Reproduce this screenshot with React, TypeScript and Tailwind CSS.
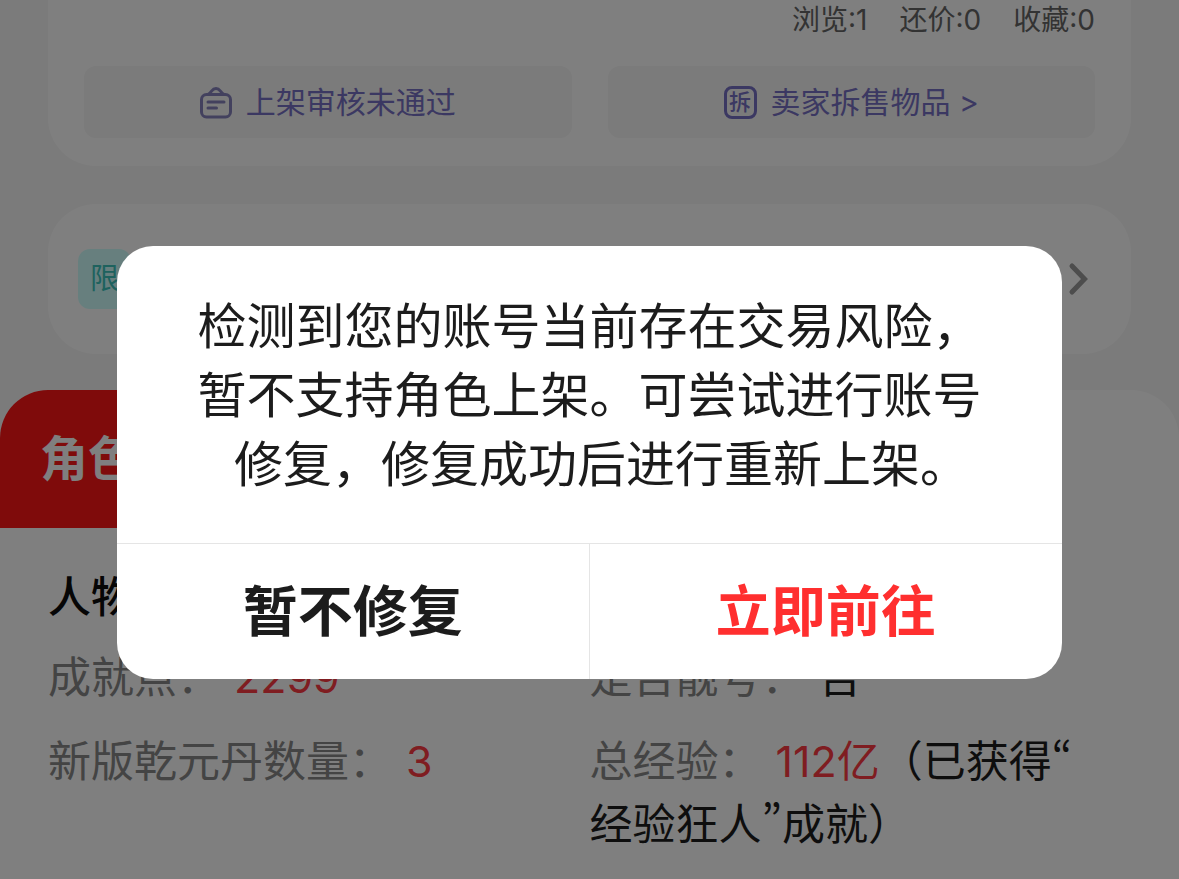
import React from 'react';

const stats = [
  { label: '浏览', value: 1 },
  { label: '还价', value: 0 },
  { label: '收藏', value: 0 },
];

function ReviewIcon() {
  return (
    <svg width="32" height="36" viewBox="0 0 32 36" fill="none" stroke="#8783bd" strokeWidth="3" strokeLinecap="round" strokeLinejoin="round">
      <rect x="1.5" y="10.5" width="29" height="22.5" rx="5" />
      <path d="M8.5 10 C11.5 8.5 12 4.5 16 4.5 C20 4.5 20.5 8.5 23.5 10" />
      <path d="M8 18 H24 M8 24 H16.5" />
    </svg>
  );
}

function SplitIcon() {
  return (
    <span className="flex size-[33px] items-center justify-center rounded-lg border-3 border-current text-[22px] leading-none font-medium">
      拆
    </span>
  );
}

function Chevron() {
  return (
    <svg width="24" height="36" viewBox="0 0 24 36" fill="none" stroke="#9a9a9a" strokeWidth="5" strokeLinecap="round" strokeLinejoin="miter">
      <path d="M5 5 L17.5 18 L5 31" />
    </svg>
  );
}

function DetailRow({ label, children }: { label: string; children: React.ReactNode }) {
  return (
    <div className="text-[43px] leading-[63px] text-[#1c1c1c]">
      <span className="mr-3.5 text-[#888888]">{label}：</span>
      {children}
    </div>
  );
}

// Curly quotes come from the CJK font, in its proportional width
function Quote({ children }: { children: string }) {
  return <span className="font-['Noto_Sans_CJK_SC',sans-serif] leading-none [font-feature-settings:'pwid']">{children}</span>;
}

function SummaryCard() {
  return (
    <section className="mx-12 rounded-b-[48px] bg-white px-9 pb-7">
      <div className="flex justify-end gap-8 text-[28px] leading-10 text-[#666666]">
        {stats.map((stat) => (
          <span key={stat.label}>
            {stat.label}:{stat.value}
          </span>
        ))}
      </div>
      <div className="mt-[26px] grid grid-cols-2 gap-9 text-[30px] leading-10 text-[#7670c4]">
        <button className="flex h-[72px] items-center justify-center gap-3.5 rounded-xl bg-[#f6f6f6]">
          <ReviewIcon />
          上架审核未通过
        </button>
        <button className="flex h-[72px] items-center justify-center gap-3.5 rounded-xl bg-[#f6f6f6]">
          <SplitIcon />
          卖家拆售物品 &gt;
        </button>
      </div>
    </section>
  );
}

function RiskDialog() {
  return (
    <div className="fixed inset-0 flex items-center justify-center bg-black/50 px-[117px] pt-[46px]">
      <div role="dialog" aria-modal="true" aria-labelledby="risk-message" className="w-full overflow-hidden rounded-[36px] bg-white">
        {/* The closing full stop hangs by half its width when the line is centred */}
        <p id="risk-message" className="px-20 pt-[46px] pb-11 text-center text-[49px] leading-[69px] text-[#1c1c1c]">
          检测到您的账号当前存在交易风险，暂不支持角色上架。可尝试进行账号修复，修复成功后进行重新上架
          <span className="-mr-6">。</span>
        </p>
        <div className="grid grid-cols-2 border-t border-[#e5e5e5] text-[55px] leading-[135px] font-bold">
          <button className="border-r border-[#e5e5e5] text-[#1c1c1c]">暂不修复</button>
          <button className="text-[#ff2f2f]">立即前往</button>
        </div>
      </div>
    </div>
  );
}

export default function App() {
  return (
    <div className="flex min-h-screen flex-col bg-[#f7f7f7] font-[Inter,'Noto_Sans_CJK_SC',sans-serif]">
      <SummaryCard />

      <section className="mx-12 mt-[38px] flex items-center justify-between rounded-[48px] bg-white py-[45px] pr-10 pl-[30px]">
        <span className="rounded-xl bg-[#cefffc] px-3 text-[29px] leading-[60px] text-[#3cc4bc]">限</span>
        <Chevron />
      </section>

      <section className="mt-9 grow overflow-hidden rounded-t-[48px] bg-white">
        <div className="grid grid-cols-3">
          <button className="bg-[#ff1616] px-10 text-left text-[48px] leading-[138px] font-bold text-white">角色</button>
        </div>
        <div className="px-12 pt-[38px]">
          <h2 className="text-[43px] leading-[63px] font-medium text-[#0c0c0c]">人物</h2>
          <div className="mt-[17px] grid grid-cols-2 gap-y-[21px]">
            <DetailRow label="成就点">
              <span className="text-[#ff3a42]">2299</span>
            </DetailRow>
            <DetailRow label="是否靓号">否</DetailRow>
            <DetailRow label="新版乾元丹数量">
              <span className="text-[#ff3a42]">3</span>
            </DetailRow>
            <DetailRow label="总经验">
              <span className="text-[#ff3a42]">112亿</span>（已获得<Quote>“</Quote>
              <br />
              经验狂人<Quote>”</Quote>成就）
            </DetailRow>
          </div>
        </div>
      </section>

      <RiskDialog />
    </div>
  );
}
